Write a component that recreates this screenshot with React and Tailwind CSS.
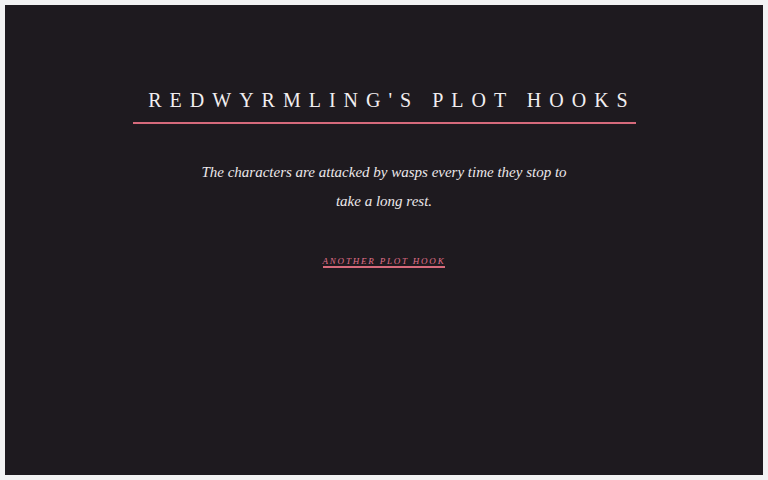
import React from 'react';

const hook = 'The characters are attacked by wasps every time they stop to take a long rest.';

export default function App() {
    return (
        <div className="w-full h-[480px] bg-[#f2f2f3] p-[5px]">
            <div className="h-[470px] w-full bg-[#1e1a1f] flex flex-col items-center pt-[83px] font-['Liberation_Serif',serif]">
                <div className="w-[503px] border-b-2 border-[#d66a7b] pb-[10px] flex justify-center">
                    <h1 className="whitespace-nowrap text-[20px] leading-[24px] tracking-[0.4em] pl-[16px] text-[#f1eef0] uppercase">
                        Redwyrmling's Plot Hooks
                    </h1>
                </div>

                <p className="mt-[34px] w-[368px] text-center italic text-[15px] leading-[29px] text-[#ece8ea]">
                    {hook}
                </p>

                <button className="mt-[40px] italic uppercase text-[9px] leading-[10px] tracking-[0.2em] text-[#e0718a] border-b-2 border-[#d66a7b] cursor-pointer">
                    Another plot hook
                </button>
            </div>
        </div>
    );
}
